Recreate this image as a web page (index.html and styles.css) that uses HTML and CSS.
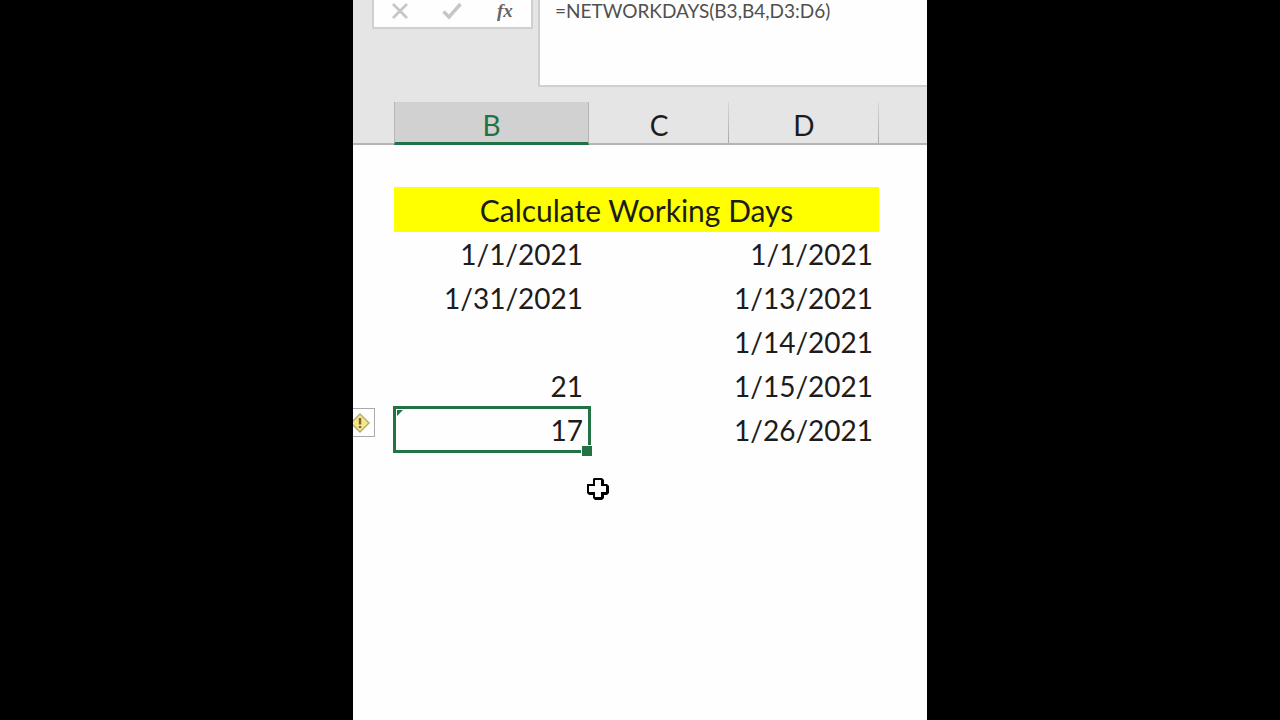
FILE: index.html
```html
<!DOCTYPE html>
<html lang="en">
<head>
    <meta charset="UTF-8">
    <meta name="viewport" content="width=device-width, initial-scale=1.0">
    <title>Calculate Working Days</title>
    <link rel="stylesheet" href="styles.css">
</head>
<body>
    <main class="app">
        <div class="formula-bar">
            <div class="formula-buttons">
                <button type="button" aria-label="Cancel">
                    <svg width="18" height="18" viewBox="0 0 18 18"><path d="M2 2L16 16M16 2L2 16" fill="none" stroke="#c6c6c6" stroke-width="2.6"/></svg>
                </button>
                <button type="button" aria-label="Enter">
                    <svg width="20" height="18" viewBox="0 0 20 18"><path d="M1.5 9.5L7 15L18.5 2" fill="none" stroke="#c6c6c6" stroke-width="3.4"/></svg>
                </button>
                <button type="button" class="fx" aria-label="Insert function">f<span>x</span></button>
            </div>
            <textarea class="formula-input" aria-label="Formula" spellcheck="false">=NETWORKDAYS(B3,B4,D3:D6)</textarea>
        </div>

        <table class="sheet">
            <colgroup>
                <col class="col-a">
                <col class="col-b">
                <col class="col-c">
                <col class="col-d">
                <col>
            </colgroup>
            <thead>
                <tr>
                    <th></th>
                    <th class="active">B</th>
                    <th class="divider">C</th>
                    <th class="divider">D</th>
                    <th></th>
                </tr>
            </thead>
            <tbody>
                <tr class="first"><td></td><td></td><td></td><td></td><td></td></tr>
                <tr class="title"><td></td><td colspan="3" class="heading">Calculate Working Days</td><td></td></tr>
                <tr><td></td><td>1/1/2021</td><td></td><td>1/1/2021</td><td></td></tr>
                <tr><td></td><td>1/31/2021</td><td></td><td>1/13/2021</td><td></td></tr>
                <tr><td></td><td></td><td></td><td>1/14/2021</td><td></td></tr>
                <tr><td></td><td>21</td><td></td><td>1/15/2021</td><td></td></tr>
                <tr>
                    <td class="anchor">
                        <button type="button" class="warning" aria-label="Formula omits adjacent cells">
                            <svg width="20" height="20" viewBox="0 0 20 20">
                                <path d="M10 1L19 10L10 19L1 10Z" fill="#f5e68c" stroke="#b9a772" stroke-width="1.4"/>
                                <path d="M10 5V11.5M10 13V15" stroke="#75672f" stroke-width="2.4"/>
                            </svg>
                        </button>
                    </td>
                    <td class="selected">
                        <svg class="error-mark" width="6" height="6" viewBox="0 0 6 6"><path d="M0 0H6L0 6Z" fill="#217346"/></svg>
                        17
                    </td>
                    <td></td>
                    <td>1/26/2021</td>
                    <td></td>
                </tr>
                <tr>
                    <td></td>
                    <td></td>
                    <td class="anchor">
                        <svg class="pointer" width="24" height="24" viewBox="0 0 24 24">
                            <path d="M8 1H16L18 3V7H21L23 9V16L21 18H18V21L16 23H9L7 21V18H3L1 16V7H7V2Z" fill="#000"/>
                            <path d="M9 3H15V9H20V15H15V20H9V15H3V9H9Z" fill="#fff"/>
                        </svg>
                    </td>
                    <td></td>
                    <td></td>
                </tr>
            </tbody>
        </table>
    </main>
</body>
</html>
```

FILE: styles.css
```css
* {
    box-sizing: border-box;
}

body {
    margin: 0;
    background-color: #000;
    color: #1c1c1c;
    font-family: Lato, "Liberation Sans", sans-serif;
}

.app {
    max-width: 574px;
    min-height: 100vh;
    margin: 0 auto;
    background-color: #fefefe;
    overflow: hidden;
}

/* Formula bar */
.formula-bar {
    display: flex;
    align-items: flex-start;
    gap: 5px;
    padding: 0 0 15px 19px;
    background-color: #e5e5e5;
}

.formula-buttons {
    display: flex;
    width: 161px;
    height: 29px;
    padding-bottom: 5px;
    background-color: #fefefe;
    border: 2px solid #d0d0d0;
    border-top: none;
}

.formula-buttons button {
    display: flex;
    flex: 1;
    justify-content: center;
    align-items: center;
    padding: 0;
    background: none;
    border: none;
}

.formula-buttons .fx {
    color: #666;
    font: italic bold 19px/22px "Liberation Serif", serif;
}

.formula-input {
    flex: 1;
    min-width: 0;
    height: 87px;
    padding: 0 15px;
    background-color: #fefefe;
    border: 2px solid #d0d0d0;
    border-width: 0 0 2px 2px;
    color: #505050;
    font: 19px/22px Lato, "Liberation Sans", sans-serif;
    resize: none;
    outline: none;
}

/* Sheet */
.sheet {
    width: 100%;
    table-layout: fixed;
    border-collapse: separate;
    border-spacing: 0;
    font-size: 28px;
    line-height: 34px;
}

.col-a {
    width: 41px;
}

.col-b {
    width: 195px;
}

.col-c {
    width: 140px;
}

.col-d {
    width: 150px;
}

.sheet th {
    height: 43px;
    padding: 5px 0 0;
    background-color: #e5e5e5;
    border-bottom: 2px solid #b5b5b5;
    font-weight: normal;
}

.sheet th.active {
    padding-top: 6px;
    background-color: #d1d1d1;
    border-bottom: 3px solid #217346;
    border-left: 1px solid #b5b5b5;
    border-right: 1px solid #b5b5b5;
    color: #217346;
}

.sheet th.divider {
    background-image: linear-gradient(#d8d8d8, #a8a8a8);
    background-position: right;
    background-repeat: no-repeat;
    background-size: 1px 100%;
}

.sheet td {
    height: 44px;
    padding: 0 6px 0 0;
    text-align: right;
}

.sheet .first td {
    height: 42px;
}

.sheet .title td {
    height: 45px;
}

.sheet td.heading {
    padding: 0;
    background-color: #ff0;
    font-size: 30px;
    text-align: center;
}

.anchor,
.selected {
    position: relative;
}

/* Selection border and fill handle */
.selected::before {
    content: "";
    position: absolute;
    inset: -2px -2px -1px -1px;
    border: 3px solid #217346;
}

.selected::after {
    content: "";
    position: absolute;
    right: -4px;
    bottom: -5px;
    width: 10px;
    height: 10px;
    background-color: #217346;
    border: 1px solid #fefefe;
}

.error-mark {
    position: absolute;
    top: 2px;
    left: 3px;
}

.warning {
    position: absolute;
    top: 0;
    left: -8px;
    display: flex;
    justify-content: center;
    align-items: center;
    width: 30px;
    height: 29px;
    padding: 0;
    background-color: #fefefe;
    border: 1px solid #aaa;
}

.pointer {
    position: absolute;
    top: 25px;
    left: -3px;
}
```
